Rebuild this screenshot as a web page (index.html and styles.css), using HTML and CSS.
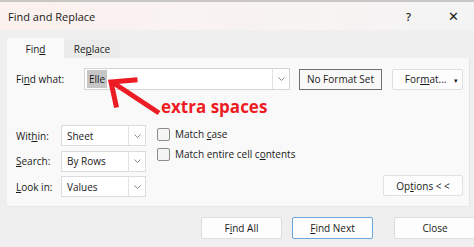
FILE: index.html
```html
<!DOCTYPE html>
<html lang="en">

<head>
    <title>Find and Replace</title>
    <link rel="stylesheet" href="styles.css">
</head>

<body>

    <div class="window">
        <div class="titlebar">
            <span class="title">Find and Replace</span>
            <span class="help">?</span>
            <span class="close-x">&#x2715;</span>
        </div>

        <div class="tabs">
            <div class="tab active">Fin<u>d</u></div>
            <div class="tab">Re<u>p</u>lace</div>
        </div>

        <div class="panel">
            <div class="find-row">
                <label class="find-label">Fi<u>n</u>d what:</label>
                <div class="combo find-input">
                    <span class="value"><span class="selected">Elle</span></span>
                    <span class="arrow">
                        <svg width="7" height="4" viewBox="0 0 7 4"><polyline points="0.5,0.5 3.5,3.5 6.5,0.5" fill="none" stroke="#8a8a8a" stroke-width="1"/></svg>
                    </span>
                </div>
                <button class="btn no-format">No Format Set</button>
                <button class="btn format">For<u>m</u>at... <span class="caret">&#9662;</span></button>
            </div>

            <div class="options">
                <div class="selects">
                    <div class="select-row">
                        <label>Wit<u>h</u>in:</label>
                        <div class="combo">
                            <span class="value">Sheet</span>
                            <span class="arrow"><svg width="7" height="4" viewBox="0 0 7 4"><polyline points="0.5,0.5 3.5,3.5 6.5,0.5" fill="none" stroke="#8a8a8a" stroke-width="1"/></svg></span>
                        </div>
                    </div>
                    <div class="select-row">
                        <label><u>S</u>earch:</label>
                        <div class="combo">
                            <span class="value">By Rows</span>
                            <span class="arrow"><svg width="7" height="4" viewBox="0 0 7 4"><polyline points="0.5,0.5 3.5,3.5 6.5,0.5" fill="none" stroke="#8a8a8a" stroke-width="1"/></svg></span>
                        </div>
                    </div>
                    <div class="select-row">
                        <label><u>L</u>ook in:</label>
                        <div class="combo">
                            <span class="value">Values</span>
                            <span class="arrow"><svg width="7" height="4" viewBox="0 0 7 4"><polyline points="0.5,0.5 3.5,3.5 6.5,0.5" fill="none" stroke="#8a8a8a" stroke-width="1"/></svg></span>
                        </div>
                    </div>
                </div>

                <div class="checks">
                    <label class="check"><span class="box"></span><span>Match <u>c</u>ase</span></label>
                    <label class="check"><span class="box"></span><span>Match entire cell c<u>o</u>ntents</span></label>
                </div>

                <button class="btn options-btn">Op<u>t</u>ions &lt; &lt;</button>
            </div>

            <!-- annotation drawn over the dialog -->
            <svg class="arrow-note" width="70" height="50" viewBox="0 0 70 50">
                <polyline points="31,7 7,9 12,32" fill="none" stroke="#ec1c24" stroke-width="5" stroke-linejoin="miter" stroke-linecap="square"/>
                <line x1="8" y1="9" x2="55" y2="40" stroke="#ec1c24" stroke-width="5"/>
            </svg>
            <span class="note">extra spaces</span>
        </div>

        <div class="footer">
            <button class="btn wide">F<u>i</u>nd All</button>
            <button class="btn wide primary"><u>F</u>ind Next</button>
            <button class="btn wide close-btn">Close</button>
        </div>
    </div>

</body>

</html>
```

FILE: styles.css
```css
body {
    margin: 0;
    font-family: "Open Sans", "Noto Sans", sans-serif;
    font-size: 10px;
    color: #1a1a1a;
    background-color: #efefef;
}

u {
    text-decoration-thickness: 1px;
    text-underline-offset: 1px;
}

.window {
    width: 474px;
    height: 247px;
    overflow: hidden;
    background-color: #efefef;
    border-top: 2px solid #c9c6c6;
    box-sizing: border-box;
}

.titlebar {
    height: 28px;
    display: flex;
    align-items: center;
    padding: 0 8px;
    background: linear-gradient(to right, #fbf1ee, #f8f3f2 50%, #f4f4f4);
}

.title {
    font-size: 11px;
    flex: 1;
}

.help {
    font-size: 11px;
    font-weight: 600;
    margin-right: 37px;
}

.close-x {
    font-size: 13px;
    margin-right: 7px;
}

.tabs {
    display: flex;
    align-items: flex-end;
    margin: 8px 0 0 7px;
    height: 20px;
}

.tab {
    width: 56px;
    height: 18px;
    line-height: 18px;
    text-align: center;
    background-color: #ebebeb;
}

.tab.active {
    width: 57px;
    height: 20px;
    line-height: 22px;
    background-color: #f9f9f9;
}

.panel {
    position: relative;
    margin: 0 4px 0 7px;
    height: 149px;
    box-sizing: border-box;
    background-color: #f9f9f9;
    border-right: 1px solid #e4e4e4;
    border-bottom: 1px solid #e8e8e8;
    padding: 10px 6px 0 9px;
}

.find-row {
    display: flex;
    align-items: center;
    height: 22px;
}

.find-label {
    width: 68px;
}

.combo {
    display: flex;
    height: 100%;
    background-color: #fff;
    border: 1px solid #d4d4d4;
    box-sizing: border-box;
}

.combo .value {
    flex: 1;
    display: flex;
    align-items: center;
    padding-left: 5px;
}

.combo .arrow {
    width: 16px;
    display: flex;
    align-items: center;
    justify-content: center;
    border-left: 1px solid #e2e2e2;
}

.find-input {
    width: 206px;
    margin-right: 9px;
}

.find-input .value {
    padding-left: 2px;
}

.selected {
    background-color: #c6c6c6;
    padding: 2px 2px;
    line-height: 14px;
}

.btn {
    font-family: inherit;
    font-size: 10px;
    color: #1a1a1a;
    background-color: #fdfdfd;
    border: 1px solid #dedede;
    border-radius: 2px;
    padding: 0;
    height: 21px;
}

.no-format {
    width: 83px;
    border: 1px solid #707070;
    border-radius: 0;
    background-color: #f9f9f9;
    margin-right: 10px;
}

.format {
    width: 71px;
    text-align: right;
    padding-right: 4px;
}

.caret {
    font-size: 7px;
    margin-left: 5px;
}

.options {
    display: flex;
    margin-top: 35px;
}

.selects {
    display: flex;
    flex-direction: column;
    gap: 4.5px;
}

.select-row {
    display: flex;
    align-items: center;
    height: 21px;
}

.select-row label {
    width: 45px;
}

.select-row .combo {
    width: 85px;
    border-color: #dcdcdc;
}

.checks {
    display: flex;
    flex-direction: column;
    gap: 4px;
    margin-left: 11px;
    padding-top: 1px;
}

.check {
    display: flex;
    align-items: center;
    height: 16px;
}

.box {
    width: 11px;
    height: 11px;
    border: 1px solid #8c8c8c;
    border-radius: 2px;
    background-color: #f4f4f4;
    margin-right: 5px;
}

.options-btn {
    width: 80px;
    height: 21px;
    margin-left: auto;
    margin-top: 50px;
    border-color: #e0e0e0;
}

.arrow-note {
    position: absolute;
    left: 97px;
    top: 15px;
}

.note {
    position: absolute;
    left: 154px;
    top: 37px;
    font-size: 17px;
    font-weight: 700;
    color: #ec1c24;
}

.footer {
    display: flex;
    justify-content: flex-end;
    padding-top: 10px;
    margin-right: -1px;
}

.btn.wide {
    width: 81px;
    height: 22px;
}

.primary {
    margin: 0 21px 0 10px;
    border: 1px solid #6aa6dc;
}

.close-btn {
    border-right: none;
}
```
